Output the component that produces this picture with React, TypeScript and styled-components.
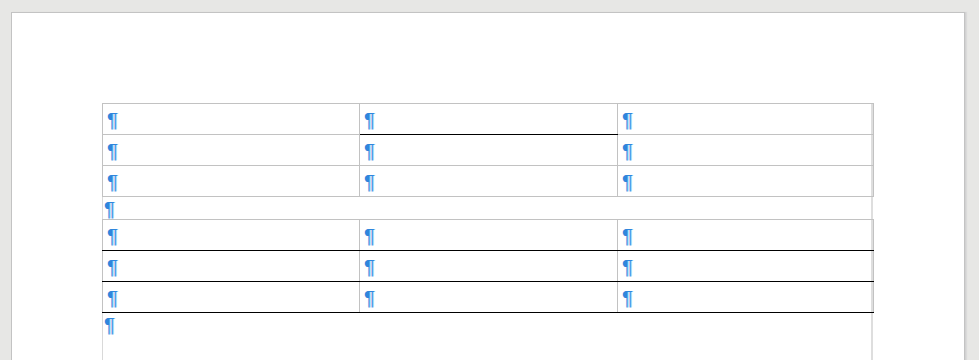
import React from 'react';
import styled, {createGlobalStyle} from "styled-components";

const GlobalStyle = createGlobalStyle`
  html, body {
    margin: 0;
    padding: 0;
    height: 100%;
    overflow: hidden;
    background: #e7e7e5;
    font-family: "Liberation Sans", Arial, sans-serif;
  }
`;

const Desk = styled.div`
  padding: 12px 0 0 11px;
  height: 360px;
  box-sizing: border-box;
  overflow: hidden;
`;

const Page = styled.div`
  width: 954px;
  height: 348px;
  box-sizing: border-box;
  background: #ffffff;
  border: 1px solid #c3c3c3;
  border-bottom: none;
  box-shadow: 1px 0 0 #d2d2d2, 2px 0 1px #dadada;
  padding: 90px 0 0 91px;
`;

const TextArea = styled.div`
  width: 771px;
  height: 258px;
  box-sizing: border-box;
  border-left: 1px solid #d9d9d9;
  border-right: 2px solid #dedede;
  margin-left: -1px;
`;

const DocTable = styled.table`
  width: 771px;
  border-collapse: collapse;
  table-layout: fixed;
  margin-left: -1px;
`;

const Row = styled.tr`
  height: 31px;
`;

const Cell = styled.td<{ $dark?: boolean }>`
  border: 1px solid #c2c2c2;
  border-bottom-color: ${({$dark}) => $dark ? "#000000" : "#c2c2c2"};
  padding: 8px 0 0 4px;
  vertical-align: top;
  box-sizing: border-box;
`;

const Mark = styled.span`
  display: inline-block;
  font-family: "Liberation Sans", Arial, sans-serif;
  font-size: 20px;
  line-height: 16px;
  color: #2f86dc;
  text-shadow: 1px 0 0 rgba(140, 195, 245, 0.85);
`;

const Para = styled.div<{ $height: number }>`
  height: ${({$height}) => $height}px;
  padding: 4px 0 0 1px;
  box-sizing: border-box;
`;

// which rows get a black bottom rule, per column
const firstTable = [
    [false, true, false],
    [false, false, false],
    [false, false, false],
];

const secondTable = [
    [true, true, true],
    [true, true, true],
    [true, true, true],
];

const Grid = ({rows}: { rows: boolean[][] }) => (
    <DocTable>
        <colgroup>
            <col style={{width: 257}}/>
            <col style={{width: 258}}/>
            <col style={{width: 256}}/>
        </colgroup>
        <tbody>
        {rows.map((row, r) => (
            <Row key={r}>
                {row.map((dark, c) => (
                    <Cell key={c} $dark={dark}><Mark>¶</Mark></Cell>
                ))}
            </Row>
        ))}
        </tbody>
    </DocTable>
);

const App = () => {
    return (
        <Desk>
            <GlobalStyle/>
            <Page>
                <TextArea>
                    <Grid rows={firstTable}/>
                    <Para $height={22}><Mark>¶</Mark></Para>
                    <Grid rows={secondTable}/>
                    <Para $height={40}><Mark>¶</Mark></Para>
                </TextArea>
            </Page>
        </Desk>
    );
};

export default App;
